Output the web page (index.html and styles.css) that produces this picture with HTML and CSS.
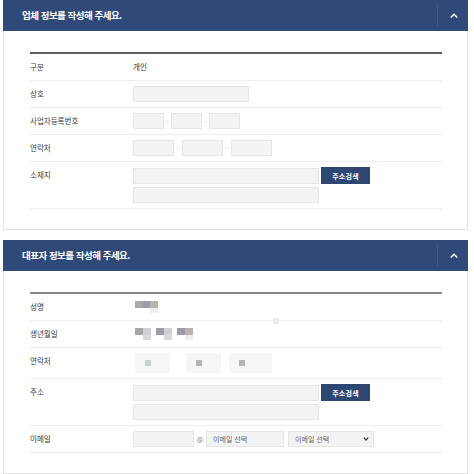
FILE: index.html
```html
<!DOCTYPE html>
<html lang="ko">
<head>
<meta charset="utf-8">
<title>정보 작성</title>
<link rel="stylesheet" href="styles.css">
</head>
<body>
<div class="page">
  <section class="card">
    <header class="card-head">
      <h2 class="card-title">업체 정보를 작성해 주세요.</h2>
      <div class="toggle"><svg class="chev" viewBox="0 0 8 5" width="8" height="5"><polyline points="0.8,4.4 4,1.2 7.2,4.4" fill="none" stroke="#fff" stroke-width="1.4"/></svg></div>
    </header>
    <div class="card-body">
      <div class="form-table">
        <div class="row">
          <div class="label">구분</div>
          <div class="field"><span class="value">개인</span></div>
        </div>
        <div class="row">
          <div class="label">상호</div>
          <div class="field"><span class="input w-name"></span></div>
        </div>
        <div class="row">
          <div class="label">사업자등록번호</div>
          <div class="field">
            <span class="input w-biz"></span><span class="dash">-</span><span class="input w-biz"></span><span class="dash">-</span><span class="input w-biz"></span>
          </div>
        </div>
        <div class="row">
          <div class="label">연락처</div>
          <div class="field">
            <span class="input w-tel"></span><span class="dash dash-wide">-</span><span class="input w-tel"></span><span class="dash dash-wide">-</span><span class="input w-tel"></span>
          </div>
        </div>
        <div class="row">
          <div class="label">소재지</div>
          <div class="field stack">
            <div class="line"><span class="input w-addr"></span><span class="btn">주소검색</span></div>
            <div class="line"><span class="input w-addr"></span></div>
          </div>
        </div>
      </div>
    </div>
  </section>

  <section class="card">
    <header class="card-head">
      <h2 class="card-title">대표자 정보를 작성해 주세요.</h2>
      <div class="toggle"><svg class="chev" viewBox="0 0 8 5" width="8" height="5"><polyline points="0.8,4.4 4,1.2 7.2,4.4" fill="none" stroke="#fff" stroke-width="1.4"/></svg></div>
    </header>
    <div class="card-body">
      <div class="form-table table-light">
        <div class="row">
          <div class="label">성명</div>
          <div class="field">
            <span class="mosaic m-name"><i class="px d1"></i><i class="px d2"></i><i class="px d3"></i></span>
          </div>
        </div>
        <div class="row">
          <div class="label">생년월일</div>
          <div class="field">
            <span class="mosaic m-birth"><i class="px d1"></i><i class="px d4"></i><i class="px gap"></i><i class="px d2"></i><i class="px d4"></i><i class="px gap"></i><i class="px d2"></i><i class="px d3"></i></span>
            <span class="speck"></span>
          </div>
        </div>
        <div class="row">
          <div class="label">연락처</div>
          <div class="field">
            <span class="blurbox b1"><i class="dot"></i></span>
            <span class="blurbox b2"><i class="dot"></i></span>
            <span class="blurbox b3"><i class="dot"></i></span>
          </div>
        </div>
        <div class="row">
          <div class="label">주소</div>
          <div class="field stack">
            <div class="line"><span class="input w-addr"></span><span class="btn">주소검색</span></div>
            <div class="line"><span class="input w-addr"></span></div>
          </div>
        </div>
        <div class="row">
          <div class="label">이메일</div>
          <div class="field">
            <span class="input w-mail"></span><span class="at">@</span><span class="input w-sel1 sel-text">이메일 선택</span><span class="input w-sel2 sel-text select">이메일 선택<svg class="sel-chev" viewBox="0 0 7 5" width="6" height="4"><polyline points="0.8,0.8 3.5,3.8 6.2,0.8" fill="none" stroke="#333" stroke-width="1.5"/></svg></span>
          </div>
        </div>
      </div>
    </div>
  </section>
</div>
</body>
</html>
```

FILE: styles.css
```css
* { box-sizing: border-box; }
html, body { margin: 0; padding: 0; background: #fff; }
body {
  font-family: "Noto Sans CJK KR", "Noto Sans", sans-serif;
  color: #3c3c3c;
  font-size: 7.5px;
}
.page {
  padding: 0 6px 0 3px;
  display: flex;
  flex-direction: column;
  gap: 10px;
}
.card { width: 465px; }
.card-head {
  height: 31px;
  background: #2f4a79;
  display: flex;
  align-items: center;
  justify-content: space-between;
}
.card-title {
  margin: 0;
  padding-left: 19px;
  color: #fff;
  font-size: 9.5px;
  font-weight: 700;
  letter-spacing: -0.5px;
  line-height: 1;
}
.toggle {
  width: 31px;
  height: 21px;
  border-left: 1px solid #42598a;
  display: flex;
  align-items: center;
  justify-content: center;
}
.chev { display: block; margin-left: 1px; margin-top: -1px; }
.card-body {
  border: 1px solid #e2e2e2;
  border-top: 0;
  padding: 21px 25px 20px 26px;
}
.form-table { border-top: 2px solid #5f5f5f; }
.table-light { border-top-color: #888; }
.row {
  display: grid;
  grid-template-columns: 103px 1fr;
  align-items: start;
  padding: 5px 0;
  border-bottom: 1px solid #eeeeee;
}
.label {
  line-height: 16px;
  color: #3a3a3a;
}
.field {
  display: flex;
  align-items: center;
  min-height: 16px;
  position: relative;
}
.value { line-height: 16px; color: #333; }
.stack { flex-direction: column; align-items: flex-start; gap: 3px; }
.line { display: flex; align-items: center; }
.input {
  display: inline-flex;
  align-items: center;
  height: 16px;
  background: #f3f3f3;
  border: 1px solid #e6e6e6;
}
.w-name { width: 116px; }
.w-biz { width: 31px; }
.w-tel { width: 41px; }
.w-addr { width: 186px; }
.w-mail { width: 61px; }
.w-sel1 { width: 78px; }
.w-sel2 { width: 86px; margin-left: 4px; }
.dash { width: 7px; text-align: center; color: #999; font-size: 6px; }
.dash-wide { width: 8px; }
.at { width: 12px; text-align: center; color: #777; font-size: 7px; }
.sel-text { color: #666; padding-left: 6px; font-size: 7px; }
.select { justify-content: space-between; padding-right: 4px; }
.sel-chev { display: block; }
.btn {
  margin-left: 2px;
  width: 49px;
  height: 17px;
  background: #2d4672;
  color: #fff;
  font-size: 7px;
  font-weight: 700;
  display: inline-flex;
  align-items: center;
  justify-content: center;
  letter-spacing: 0.2px;
}
/* mosaic placeholders for masked data */
.mosaic { display: inline-flex; align-items: flex-start; height: 12px; margin-left: 2px; }
.px { display: block; width: 8px; height: 7px; }
.px.d1 { background: #a9a6a8; }
.px.d2 { background: #9e9ca6; }
.px.d3 { background: #b6b4ad; box-shadow: 0 5px 0 #eeeeea; }
.px.d4 { background: #d2d0d6; box-shadow: 0 5px 0 #d9d9d9; }
.px.gap { width: 5px; background: transparent; }
.m-name .px { width: 7.5px; }
.speck {
  position: absolute;
  left: 140px;
  top: -8px;
  width: 6px;
  height: 6px;
  background: #ececec;
}
.blurbox {
  display: inline-flex;
  align-items: center;
  height: 20px;
  background: #f6f6f6;
  margin-left: 2px;
  padding-left: 10px;
}
.b1 { width: 35px; }
.b2 { width: 35px; margin-left: 16px; }
.b3 { width: 43px; margin-left: 8px; }
.dot { display: block; width: 6px; height: 6px; background: #c9cfcc; }
.b2 .dot, .b3 .dot { background: #b5b5b5; }
```
